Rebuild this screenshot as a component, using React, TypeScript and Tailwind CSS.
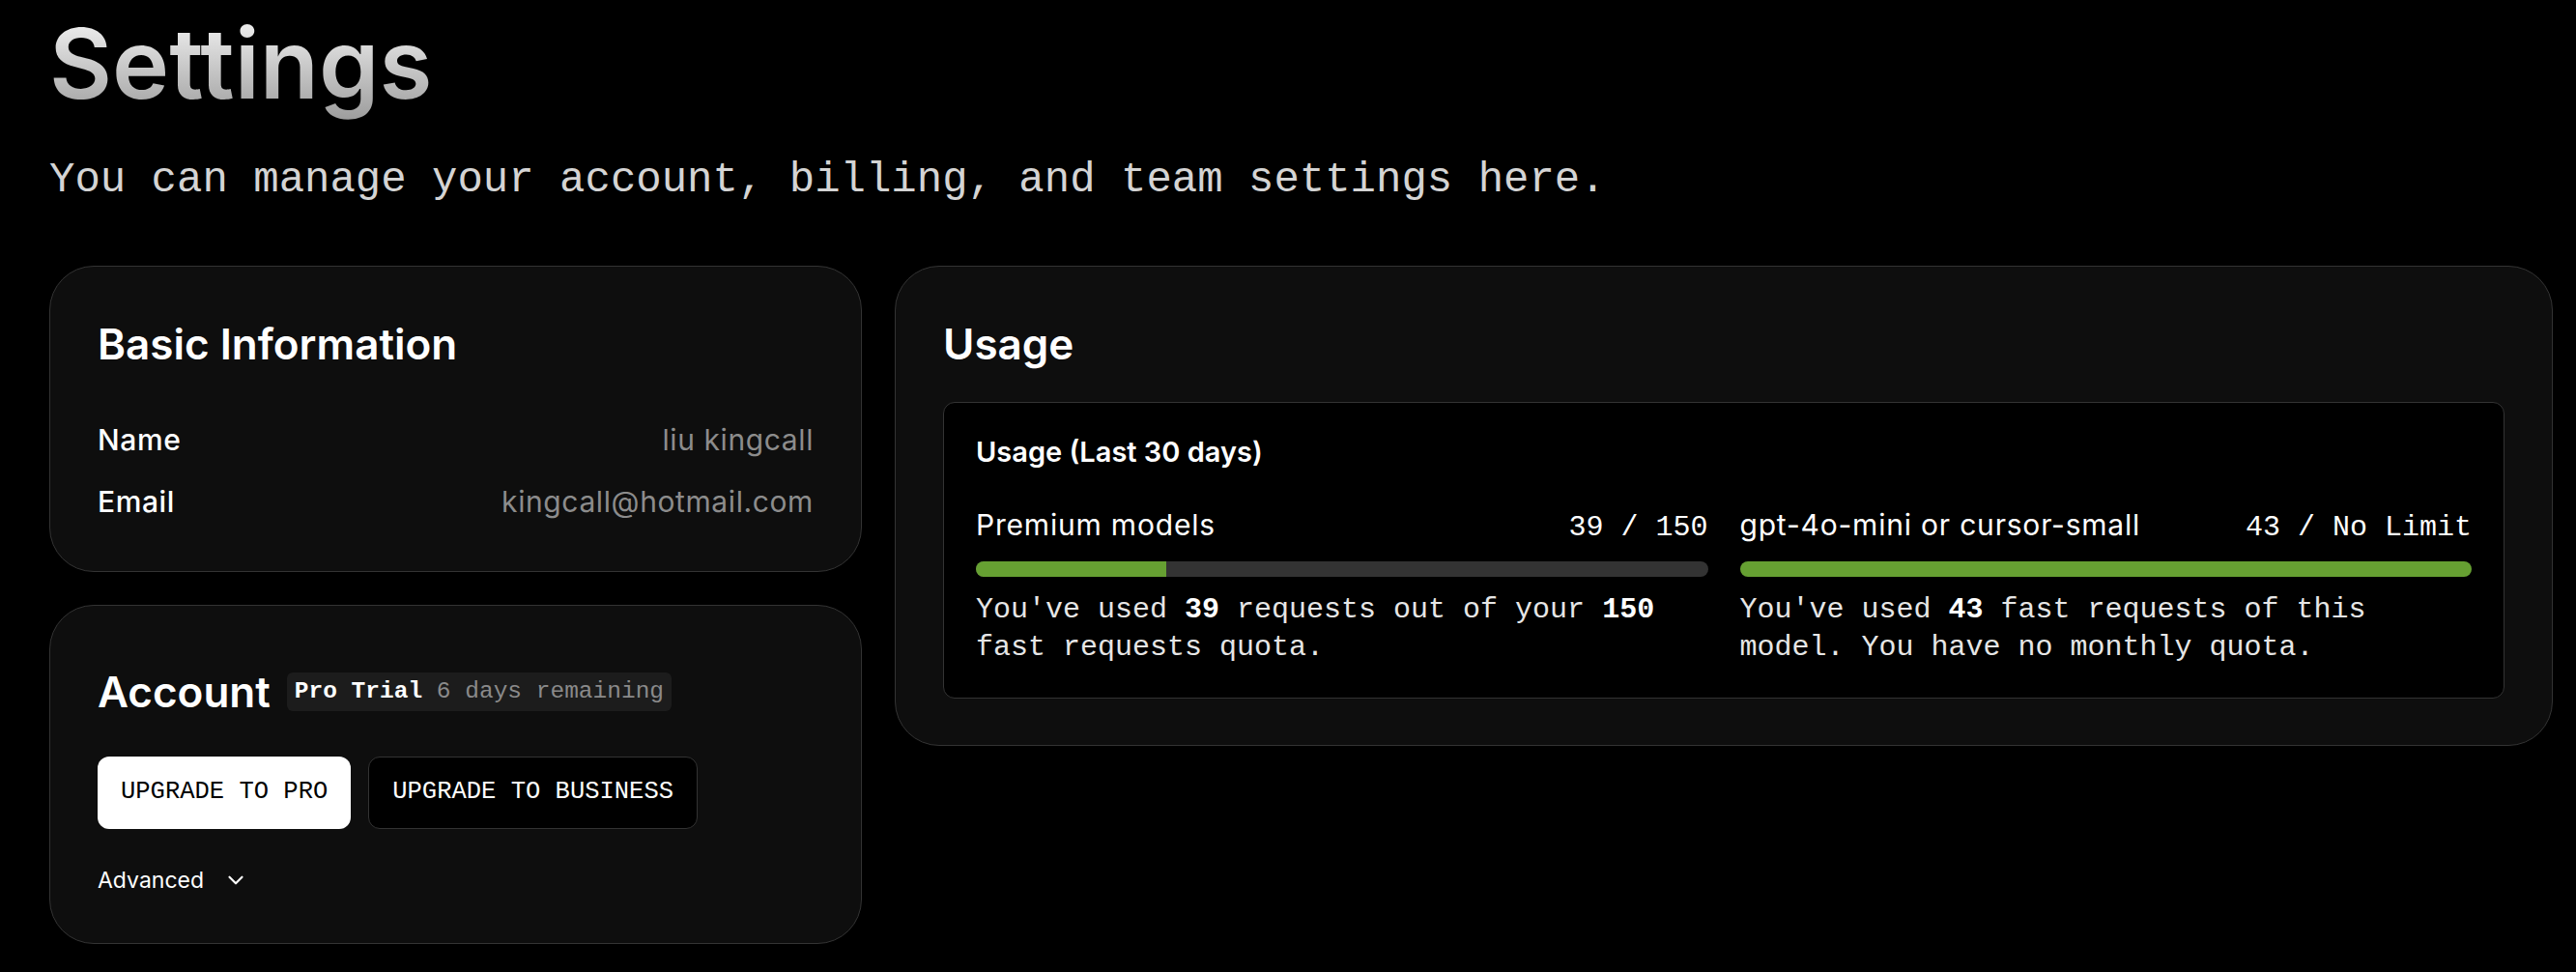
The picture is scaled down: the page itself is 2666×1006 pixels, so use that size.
import { ChevronDown } from 'lucide-react';

const sans = "font-['Inter','Noto_Sans',sans-serif]";
const mono = "font-['Liberation_Mono','DejaVu_Sans_Mono',monospace]";

function InfoRow({ label, value, className }: { label: string; value: string; className?: string }) {
  return (
    <div className={`flex items-center justify-between text-[30px] tracking-[0.6px] leading-none ${className ?? ''}`}>
      <span className="font-medium text-white">{label}</span>
      <span className="text-[#8c8c8c]">{value}</span>
    </div>
  );
}

function UsageColumn({
  name,
  count,
  percent,
  children,
}: {
  name: string;
  count: string;
  percent: number;
  children: React.ReactNode;
}) {
  return (
    <div className="flex flex-col">
      <div className="flex items-baseline justify-between leading-none">
        <span className="text-[30px] tracking-[0.8px] text-white">{name}</span>
        <span className={`${mono} text-[30px] text-white`}>{count}</span>
      </div>
      <div className="mt-[20px] h-4 w-full rounded-full bg-[#333333] overflow-hidden">
        {/* bar width comes from data */}
        <div className="h-full bg-[#66a032]" style={{ width: `${percent}%` }} />
      </div>
      <p className={`${mono} mt-[15px] text-[30px] leading-[39px] text-[#e6e6e6]`}>{children}</p>
    </div>
  );
}

export default function App() {
  return (
    <div className={`min-h-screen bg-black text-white pl-[51px] pr-[24px] ${sans} antialiased`}>
      {/* Header */}
      <header className="pt-[3px]">
        <h1 className="text-[100px] font-semibold leading-[1.25] bg-linear-to-b from-white to-[#9a9a9a] bg-clip-text text-transparent w-fit">
          Settings
        </h1>
        <p className={`${mono} mt-[36px] text-[44px] leading-none text-[#d4d4d4]`}>
          You can manage your account, billing, and team settings here.
        </p>
      </header>

      <div className="mt-[67px] flex items-start gap-[34px]">
        {/* Left column */}
        <div className="w-[841px] flex flex-col gap-[34px]">
          <section className="rounded-[46px] border border-[#333333] bg-[#0e0e0e] px-[49px] pt-[58px] pb-[57px]">
            <h2 className="text-[44px] font-semibold leading-none">Basic Information</h2>
            <InfoRow label="Name" value="liu kingcall" className="mt-[62px]" />
            <InfoRow label="Email" value="kingcall@hotmail.com" className="mt-[34px]" />
          </section>

          <section className="rounded-[46px] border border-[#333333] bg-[#0e0e0e] px-[49px] pt-[67px] pb-[52px]">
            <div className="flex items-center gap-[17px]">
              <h2 className="text-[44px] font-semibold leading-none">Account</h2>
              <span className={`${mono} h-10 flex items-center px-2 rounded-md bg-[#1c1c1c] text-[24.5px]`}>
                <span className="font-bold text-white">Pro Trial</span>
                <span className="text-[#8a8a8a]">&nbsp;6 days remaining</span>
              </span>
            </div>
            <div className="mt-[45px] flex gap-[18px]">
              <button className={`${mono} h-[75px] px-6 rounded-xl bg-white text-black text-[25.5px] font-medium`}>
                UPGRADE TO PRO
              </button>
              <button className={`${mono} h-[75px] px-6 rounded-xl bg-black border border-[#333333] text-white text-[25.5px] font-medium`}>
                UPGRADE TO BUSINESS
              </button>
            </div>
            <button className="mt-[40px] flex items-center gap-5 text-[23px] leading-none text-white">
              <span>Advanced</span>
              <ChevronDown size={26} strokeWidth={2} />
            </button>
          </section>
        </div>

        {/* Right column */}
        <section className="flex-1 rounded-[46px] border border-[#333333] bg-[#0e0e0e] px-[49px] pt-[58px] pb-[48px]">
          <h2 className="text-[44px] font-semibold leading-none">Usage</h2>
          <div className="mt-[38px] rounded-xl border border-[#333333] bg-black px-[33px] pt-[36px] pb-[32px]">
            <h3 className="text-[29px] font-semibold leading-none">Usage (Last 30 days)</h3>
            <div className="mt-[46px] grid grid-cols-2 gap-[33px]">
              <UsageColumn name="Premium models" count="39 / 150" percent={26}>
                You've used <b className="text-white">39</b> requests out of your <b className="text-white">150</b> fast requests quota.
              </UsageColumn>
              <UsageColumn name="gpt-4o-mini or cursor-small" count="43 / No Limit" percent={100}>
                You've used <b className="text-white">43</b> fast requests of this model. You have no monthly quota.
              </UsageColumn>
            </div>
          </div>
        </section>
      </div>
    </div>
  );
}
